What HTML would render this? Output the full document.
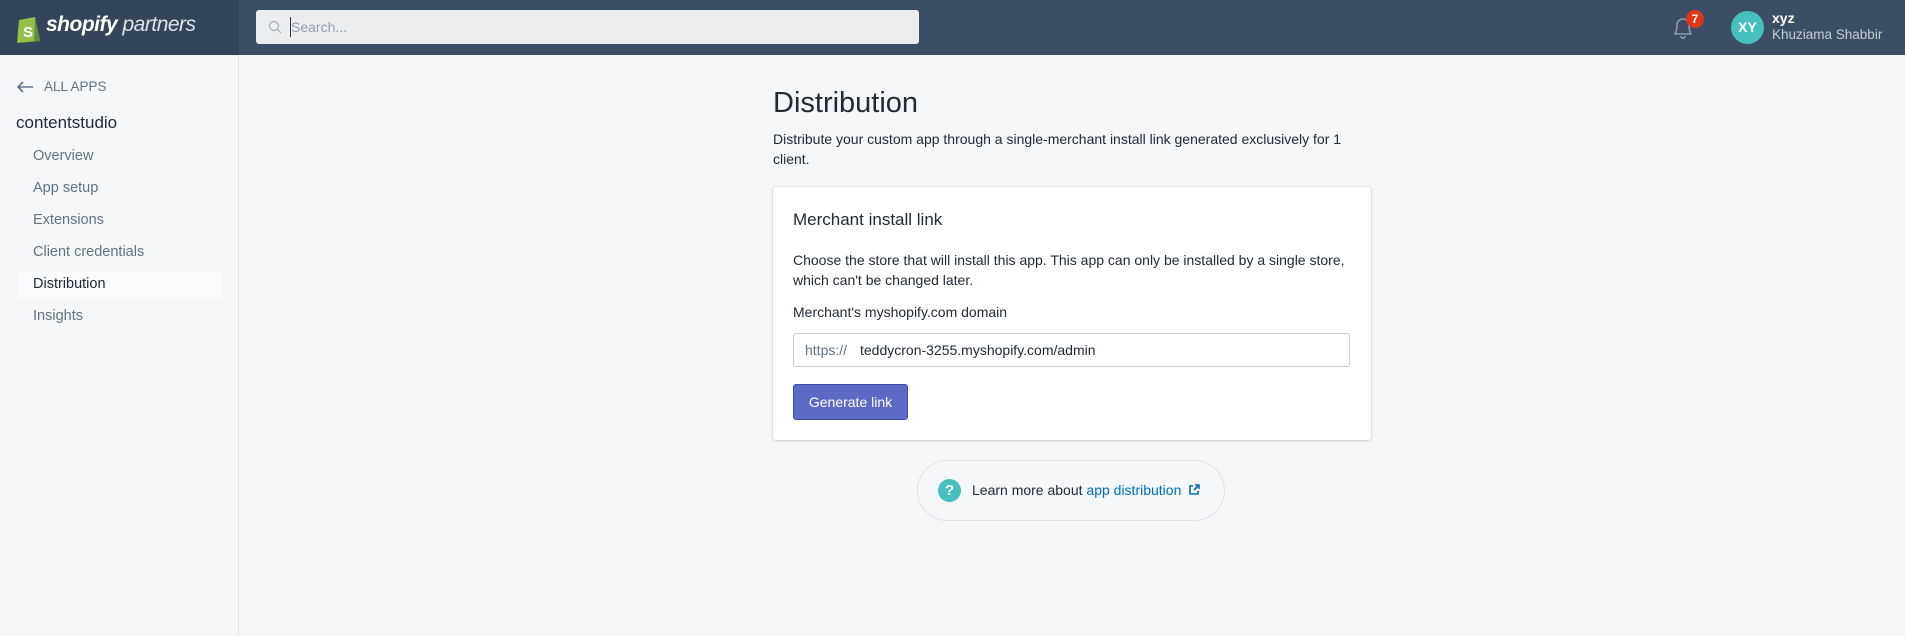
<!DOCTYPE html>
<html><head><meta charset="utf-8"><style>
*{box-sizing:border-box;margin:0;padding:0}
body{width:1905px;height:636px;overflow:hidden;background:#f4f6f8;font-family:"Liberation Sans",sans-serif;color:#212b36;position:relative}
.top{position:absolute;left:0;top:0;width:1905px;height:55px;background:#3c4e66}
.topl{position:absolute;left:0;top:0;width:239px;height:55px;background:#34445b}
.abs{position:absolute}
.side{position:absolute;left:0;top:55px;width:239px;height:581px;border-right:1px solid #dfe3e8;background:#f4f6f8}
.nav{position:absolute;left:33px;font-size:14.5px;color:#637381}
</style></head><body>
<div class="top"></div><div class="topl"></div>
<svg class="abs" style="left:15px;top:12px" width="28" height="32" viewBox="0 0 28 32"><path d="M4 8 L20 5 L25 29 L2 31 Z" fill="#95bf47"/><path d="M20 5 L25 29 L19 30 Z" fill="#5e8e3e"/><text x="8" y="25" font-family="Liberation Sans" font-weight="bold" font-size="15" fill="#fff">S</text></svg>
<div class="abs" style="left:46px;top:13px;font-size:21px;color:#fff;font-style:italic;letter-spacing:-0.5px"><b>shopify</b><span style="font-weight:normal;color:#dfe3e8"> partners</span></div>
<div class="abs" style="left:256px;top:10px;width:663px;height:34px;background:#ebedef;border-radius:3px"></div>
<svg class="abs" style="left:268px;top:20px" width="14" height="14" viewBox="0 0 14 14"><circle cx="6" cy="6" r="4.5" stroke="#b0b7bf" stroke-width="1.4" fill="none"/><path d="M9.5 9.5 L13 13" stroke="#b0b7bf" stroke-width="1.4"/></svg>
<div class="abs" style="left:290px;top:17px;width:1px;height:20px;background:#333"></div>
<div class="abs" style="left:291px;top:19px;font-size:14px;color:#919eab">Search...</div>
<svg class="abs" style="left:1671px;top:14px" width="24" height="28" viewBox="0 0 24 28"><path d="M4 20 C6 17 6 14 6 11 C6 7 9 5 12 5 C15 5 18 7 18 11 C18 14 18 17 20 20 Z M10 22 C10 25 14 25 14 22" stroke="#8f9aa8" stroke-width="1.6" fill="none"/></svg>
<div class="abs" style="left:1686px;top:10px;width:18px;height:18px;border-radius:50%;background:#de3618;color:#fff;font-size:12px;font-weight:bold;text-align:center;line-height:18px">7</div>
<div class="abs" style="left:1731px;top:11px;width:33px;height:33px;border-radius:50%;background:#47c1bf;color:#fff;font-size:14px;font-weight:bold;text-align:center;line-height:33px">XY</div>
<div class="abs" style="left:1772px;top:10px;font-size:14px;font-weight:bold;color:#fff">xyz</div>
<div class="abs" style="left:1772px;top:27px;font-size:13.5px;color:#c4cdd5">Khuziama Shabbir</div>
<div class="side"></div>
<svg class="abs" style="left:16px;top:80px" width="18" height="14" viewBox="0 0 18 14"><path d="M17 7 H2 M7 2 L2 7 L7 12" stroke="#637381" stroke-width="1.6" fill="none"/></svg>
<div class="abs" style="left:44px;top:79px;font-size:13.5px;color:#637381">ALL APPS</div>
<div class="abs" style="left:16px;top:113px;font-size:17px;color:#212b36">contentstudio</div>
<div class="nav" style="top:148px">Overview</div>
<div class="nav" style="top:180px">App setup</div>
<div class="nav" style="top:212px">Extensions</div>
<div class="nav" style="top:244px">Client credentials</div>
<div class="abs" style="left:17px;top:271px;width:206px;height:28px;background:#fafbfc;border-radius:3px"></div>
<div class="nav" style="top:276px;color:#212b36">Distribution</div>
<div class="nav" style="top:308px">Insights</div>
<div class="abs" style="left:773px;top:87px;font-size:29px;color:#212b36">Distribution</div>
<div class="abs" style="left:773px;top:129px;width:600px;font-size:14px;line-height:20px;color:#212b36">Distribute your custom app through a single-merchant install link generated exclusively for 1 client.</div>
<div class="abs" style="left:773px;top:187px;width:598px;height:253px;background:#fff;border-radius:3px;box-shadow:0 0 0 1px rgba(63,63,68,.07),0 1px 3px rgba(63,63,68,.15)"></div>
<div class="abs" style="left:793px;top:210px;font-size:17px;color:#212b36">Merchant install link</div>
<div class="abs" style="left:793px;top:250px;width:560px;font-size:14px;line-height:20px">Choose the store that will install this app. This app can only be installed by a single store, which can't be changed later.</div>
<div class="abs" style="left:793px;top:304px;font-size:14px">Merchant's myshopify.com domain</div>
<div class="abs" style="left:793px;top:333px;width:557px;height:34px;border:1px solid #c4cdd5;border-radius:3px;background:#fff"></div>
<div class="abs" style="left:805px;top:342px;font-size:14px;color:#637381">https://</div>
<div class="abs" style="left:860px;top:342px;font-size:14px;color:#212b36">teddycron-3255.myshopify.com/admin</div>
<div class="abs" style="left:793px;top:384px;width:115px;height:36px;background:#5c6ac4;border:1px solid #3f4eae;border-radius:3px;color:#fff;font-size:14px;text-align:center;line-height:34px">Generate link</div>
<div class="abs" style="left:917px;top:460px;width:308px;height:61px;border:1px solid #dfe3e8;border-radius:31px"></div>
<div class="abs" style="left:938px;top:479px;width:23px;height:23px;border-radius:50%;background:#47c1bf;color:#fff;font-weight:bold;font-size:15px;text-align:center;line-height:23px">?</div>
<div class="abs" style="left:972px;top:482px;font-size:14px;color:#212b36">Learn more about <span style="color:#006fbb">app distribution</span></div>
<svg class="abs" style="left:1188px;top:484px" width="12" height="12" viewBox="0 0 12 12"><path d="M5 2 H2 V10 H10 V7 M7 1 H11 V5 M11 1 L6 6" stroke="#006fbb" stroke-width="1.6" fill="none"/></svg>
</body></html>
